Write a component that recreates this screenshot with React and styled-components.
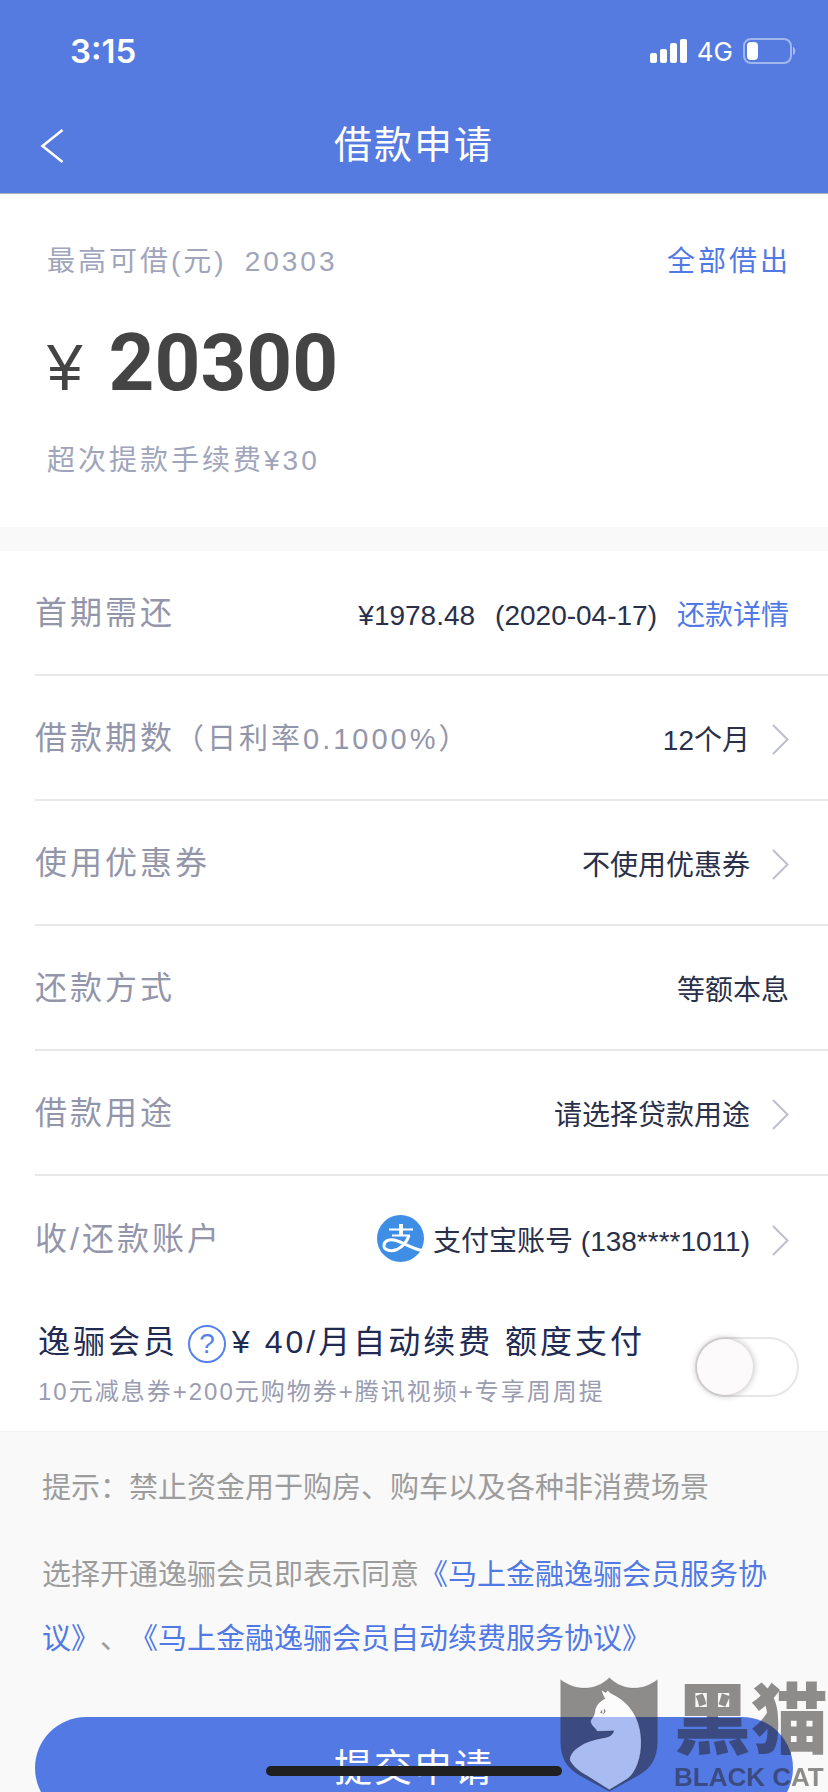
import React, { useState } from 'react'
import styled, { createGlobalStyle } from 'styled-components'

const GlobalStyle = createGlobalStyle`
  * {
    box-sizing: border-box;
  }
  body {
    margin: 0;
    background: #f9f9f9;
    font-family: "Liberation Sans", "Noto Sans CJK SC", sans-serif;
    text-spacing-trim: space-all;
  }
  button {
    padding: 0;
    border: 0;
    background: none;
    font: inherit;
    color: inherit;
    cursor: pointer;
  }
  a {
    color: #5179e6;
    text-decoration: none;
  }
  svg {
    display: block;
    flex: none;
  }
`

const Screen = styled.div`
  height: 100vh;
  overflow-y: auto;
  scrollbar-width: none;
`

const Header = styled.header`
  background: #567be0;
  color: #fff;
  border-bottom: 1px solid #a9abb5;
`

const StatusBar = styled.div`
  display: flex;
  align-items: center;
  justify-content: space-between;
  height: 98px;
  padding: 4px 32px 0 70px;
  font-family: Inter, sans-serif;
`

const Clock = styled.span`
  font-size: 33px;
  font-weight: 600;
`

const StatusIcons = styled.div`
  display: flex;
  align-items: center;
  gap: 10px;
  font-size: 26px;
  font-weight: 400;
`

const NavBar = styled.div`
  display: grid;
  grid-template-columns: 100px 1fr 100px;
  align-items: center;
  height: 95px;
`

const BackButton = styled.button`
  padding-left: 40px;
`

const Title = styled.h1`
  margin: 0;
  padding-bottom: 8px;
  text-align: center;
  font-size: 38px;
  font-weight: 400;
  letter-spacing: 2px;
`

const AmountCard = styled.section`
  padding: 48px 37px 46px 47px;
  background: #fff;
  font-size: 28px;
  line-height: 40px;
  letter-spacing: 3px;
  color: #a0a5bb;
`

const Limit = styled.div`
  display: flex;
  justify-content: space-between;

  span span {
    margin-left: 18px;
  }
`

const AllButton = styled.button`
  color: #5179e6;
  letter-spacing: 3px;
`

const Amount = styled.div`
  display: flex;
  align-items: baseline;
  gap: 26px;
  margin: 41px 0 38px;
  font-family: Roboto, sans-serif;
  font-size: 80px;
  font-weight: 700;
  line-height: 80px;
  letter-spacing: 0;
  color: #444;

  small {
    font-family: "Liberation Sans", sans-serif;
    font-size: 64px;
    font-weight: 400;
    line-height: 64px;
  }
`

const Details = styled.ul`
  margin: 24px 0 0;
  padding: 0 0 0 35px;
  list-style: none;
  background: #fff;
`

const Row = styled.li`
  display: flex;
  align-items: center;
  justify-content: space-between;
  height: 125px;
  padding-right: 39px;
  border-bottom: ${p => (p.$last ? '0' : '2px solid #e8e8e8')};
`

const Label = styled.span`
  padding-bottom: 6px;
  font-size: 32px;
  letter-spacing: 3px;
  color: #9396aa;

  small {
    font-size: 29px;
  }
`

const Value = styled.span`
  display: flex;
  align-items: baseline;
  gap: 20px;
  font-size: 28px;
  color: #2a3049;
`

const PickButton = styled.button`
  display: flex;
  align-items: center;
  gap: 22px;
  font-size: 28px;
  color: #2a3049;
`

const Account = styled.span`
  display: flex;
  align-items: center;
  gap: 9px;
`

const Member = styled.section`
  display: flex;
  align-items: center;
  justify-content: space-between;
  padding: 16px 29px 18px 38px;
  background: #fff;
`

const MemberTitle = styled.div`
  display: flex;
  align-items: center;
  font-size: 32px;
  line-height: 50px;
  letter-spacing: 3px;
  color: #212a52;
`

const HelpButton = styled.button`
  display: flex;
  align-items: center;
  justify-content: center;
  width: 38px;
  height: 38px;
  margin: 4px 6px 0 10px;
  border: 2px solid #5580f0;
  border-radius: 50%;
  font-size: 28px;
  line-height: 34px;
  color: #5580f0;
`

const MemberNote = styled.div`
  margin-top: 4px;
  font-size: 24px;
  line-height: 42px;
  letter-spacing: 2px;
  color: #9a9cb0;
`

const Switch = styled.input`
  appearance: none;
  flex: none;
  width: 104px;
  height: 60px;
  margin: 4px 0 0;
  border: 2px solid #e8e6e7;
  border-radius: 30px;
  background: ${p => (p.checked ? '#567be0' : '#fff')};
  cursor: pointer;

  &::before {
    content: '';
    display: block;
    width: 56px;
    height: 56px;
    margin-left: ${p => (p.checked ? '44px' : '0')};
    border-radius: 50%;
    background: #fcfafb;
    box-shadow: 0 0 6px 1px rgba(60, 50, 55, 0.3);
  }
`

const Footer = styled.footer`
  padding: 24px 35px 0;
  border-top: 1px solid #f2f2f2;
`

const Tips = styled.p`
  margin: 0 7px 23px;
  font-size: 29px;
  line-height: 64px;
  color: #9c9c9c;
`

const SubmitButton = styled.button`
  width: 100%;
  height: 102px;
  margin-top: 23px;
  padding-bottom: 8px;
  border-radius: 51px;
  background: #5379e4;
  color: #fff;
  font-size: 38px;
  letter-spacing: 2px;
`

const HomeIndicator = styled.div`
  position: fixed;
  bottom: 16px;
  left: 50%;
  width: 296px;
  height: 10px;
  margin-left: -148px;
  border-radius: 5px;
  background: #202020;
`

const Watermark = styled.div`
  position: fixed;
  right: 0;
  bottom: 0;
  display: flex;
  align-items: flex-end;
  gap: 16px;
  color: rgba(35, 30, 30, 0.5);
  pointer-events: none;
`

const WatermarkText = styled.div`
  font-size: 26px;
  font-weight: 700;
  line-height: 30px;

  strong {
    display: block;
    font-size: 77px;
    font-weight: 900;
    line-height: 82px;
  }
`

const Signal = () => (
  <svg width="37" height="24" viewBox="0 0 37 24" fill="#fff">
    <rect x="0" y="14" width="7" height="10" rx="2" />
    <rect x="10" y="10" width="7" height="14" rx="2" />
    <rect x="20" y="4" width="7" height="20" rx="2" />
    <rect x="30" y="0" width="7" height="24" rx="2" />
  </svg>
)

const Battery = () => (
  <svg width="53" height="26" viewBox="0 0 53 26">
    <rect x="1" y="1" width="47" height="24" rx="7" fill="none" stroke="#fff" strokeOpacity="0.45" strokeWidth="2" />
    <rect x="4" y="4" width="11" height="18" rx="4" fill="#fff" />
    <path d="M50 9c3 1 3 7 0 8z" fill="#fff" fillOpacity="0.5" />
  </svg>
)

const BackIcon = () => (
  <svg width="24" height="34" viewBox="0 0 24 34" fill="none" stroke="#fff" strokeWidth="2.5">
    <path d="M22.5 1 2.5 17l20 16" />
  </svg>
)

const Chevron = () => (
  <svg width="17" height="34" viewBox="0 0 17 34" fill="none" stroke="#bdbfcd" strokeWidth="2">
    <path d="M1 4l14.500 14.500L1 33" />
  </svg>
)

const Alipay = () => (
  <svg width="47" height="47" viewBox="0 0 47 47">
    <circle cx="23.500" cy="23.500" r="23.500" fill="#3e8ee5" />
    <g fill="none" stroke="#fff">
      <path d="M12 14.500h24M15 20.500h18" strokeWidth="2.200" />
      <path d="M24 9v11" strokeWidth="4" />
      <path d="M32 20.500c-2 6-6 11-12 14-6 2.500-13 1-13-4s6-7 12-5c8 2.500 16 8 26 10" strokeWidth="3" />
    </g>
  </svg>
)

const cat =
  'M180 89l14 8 5-7 8 8c44 20 73 54 84 92 14 46 10 96-8 134-8 16-19 29-32 36l-47 28-62-39c-28-15-46-30-57-50 2-24 24-38 46-50 26-12 44-14 61-17 14-3 22-9 26-21l-50 2c-6-11-18-17-20-29 1-9 10-14 12-26 1-20 13-35 31-43-5-8-8-16-11-26z'

const CatShield = () => (
  <svg width="98" height="115" viewBox="56 50 294 345" stroke="#231e1e" strokeOpacity="0.2" strokeWidth="2">
    <path
      d={`M58 58c44 34 105 35 146-6 41 41 102 40 144 6v182c0 54-18 85-62 108l-82 45-84-45c-44-25-62-54-62-108z ${cat}`}
      fill="#231e1e"
      fillOpacity="0.5"
      fillRule="evenodd"
    />
    <path d={cat} fill="#fff" fillOpacity="0.5" />
    <path d="M177 157l4-8 2 10zM188 146c7 4 4 12-3 15 4-5 4-9 3-15z" fill="#231e1e" fillOpacity="0.5" />
  </svg>
)

const rows = [
  { label: '借款期数', note: '（日利率0.1000%）', value: '12个月', pick: true },
  { label: '使用优惠券', value: '不使用优惠券', pick: true },
  { label: '还款方式', value: '等额本息' },
  { label: '借款用途', value: '请选择贷款用途', pick: true }
]

export default function App() {
  const [member, setMember] = useState(false)

  return (
    <Screen>
      <GlobalStyle />
      <Header>
        <StatusBar>
          <Clock>3:15</Clock>
          <StatusIcons>
            <Signal />
            <span>4G</span>
            <Battery />
          </StatusIcons>
        </StatusBar>
        <NavBar>
          <BackButton aria-label="返回">
            <BackIcon />
          </BackButton>
          <Title>借款申请</Title>
        </NavBar>
      </Header>

      <AmountCard>
        <Limit>
          <span>最高可借(元)<span>20303</span></span>
          <AllButton>全部借出</AllButton>
        </Limit>
        <Amount>
          <small>¥</small>
          <span>20300</span>
        </Amount>
        <div>超次提款手续费¥30</div>
      </AmountCard>

      <Details>
        <Row>
          <Label>首期需还</Label>
          <Value>
            <span>¥1978.48</span>
            <span>(2020-04-17)</span>
            <a href="#detail">还款详情</a>
          </Value>
        </Row>
        {rows.map(row => (
          <Row key={row.label}>
            <Label>
              {row.label}
              {row.note && <small>{row.note}</small>}
            </Label>
            {row.pick ? (
              <PickButton>
                {row.value}
                <Chevron />
              </PickButton>
            ) : (
              <Value>{row.value}</Value>
            )}
          </Row>
        ))}
        <Row $last>
          <Label>收/还款账户</Label>
          <PickButton>
            <Account>
              <Alipay />
              支付宝账号 (138****1011)
            </Account>
            <Chevron />
          </PickButton>
        </Row>
      </Details>

      <Member>
        <div>
          <MemberTitle>
            <label htmlFor="member">逸骊会员</label>
            <HelpButton aria-label="会员说明">?</HelpButton>
            <span>¥ 40/月自动续费 额度支付</span>
          </MemberTitle>
          <MemberNote>10元减息券+200元购物券+腾讯视频+专享周周提</MemberNote>
        </div>
        <Switch
          id="member"
          type="checkbox"
          role="switch"
          checked={member}
          onChange={e => setMember(e.target.checked)}
        />
      </Member>

      <Footer>
        <Tips>提示：禁止资金用于购房、购车以及各种非消费场景</Tips>
        <Tips>
          选择开通逸骊会员即表示同意
          <a href="#service">《马上金融逸骊会员服务协议》</a>、
          <a href="#renew">《马上金融逸骊会员自动续费服务协议》</a>
        </Tips>
        <SubmitButton>提交申请</SubmitButton>
      </Footer>

      <HomeIndicator />
      <Watermark>
        <CatShield />
        <WatermarkText>
          <strong>黑猫</strong>
          BLACK CAT
        </WatermarkText>
      </Watermark>
    </Screen>
  )
}
